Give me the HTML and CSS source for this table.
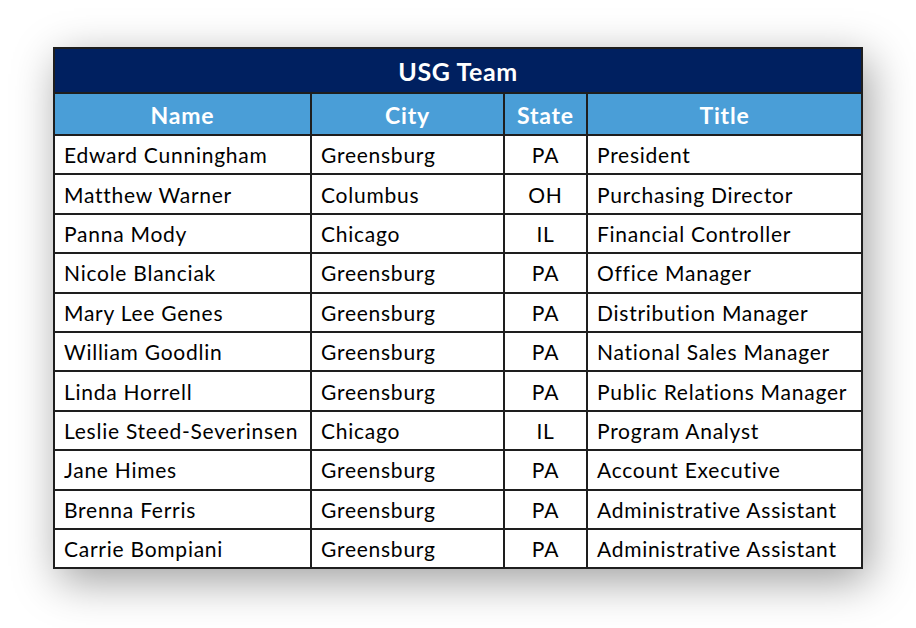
FILE: index.html
```html
<!DOCTYPE html>
<html lang="en">
<head>
<meta charset="utf-8">
<title>USG Team</title>
<link rel="stylesheet" href="styles.css">
</head>
<body>
<main class="page">
  <table class="team">
    <colgroup>
      <col class="c-name">
      <col class="c-city">
      <col class="c-state">
      <col class="c-title">
    </colgroup>
    <thead>
      <tr class="caption-row"><th colspan="4">USG Team</th></tr>
      <tr class="head-row">
        <th>Name</th><th>City</th><th>State</th><th>Title</th>
      </tr>
    </thead>
    <tbody>
      <tr><td>Edward Cunningham</td><td>Greensburg</td><td class="st">PA</td><td>President</td></tr>
      <tr><td>Matthew Warner</td><td>Columbus</td><td class="st">OH</td><td>Purchasing Director</td></tr>
      <tr><td>Panna Mody</td><td>Chicago</td><td class="st">IL</td><td>Financial Controller</td></tr>
      <tr><td>Nicole Blanciak</td><td>Greensburg</td><td class="st">PA</td><td>Office Manager</td></tr>
      <tr><td>Mary Lee Genes</td><td>Greensburg</td><td class="st">PA</td><td>Distribution Manager</td></tr>
      <tr><td>William Goodlin</td><td>Greensburg</td><td class="st">PA</td><td>National Sales Manager</td></tr>
      <tr><td>Linda Horrell</td><td>Greensburg</td><td class="st">PA</td><td>Public Relations Manager</td></tr>
      <tr><td>Leslie Steed-Severinsen</td><td>Chicago</td><td class="st">IL</td><td>Program Analyst</td></tr>
      <tr><td>Jane Himes</td><td>Greensburg</td><td class="st">PA</td><td>Account Executive</td></tr>
      <tr><td>Brenna Ferris</td><td>Greensburg</td><td class="st">PA</td><td>Administrative Assistant</td></tr>
      <tr><td>Carrie Bompiani</td><td>Greensburg</td><td class="st">PA</td><td>Administrative Assistant</td></tr>
    </tbody>
  </table>
</main>
</body>
</html>
```

FILE: styles.css
```css
html, body {
  margin: 0;
  padding: 0;
  background: #ffffff;
}
.page {
  width: 916px;
  height: 628px;
  padding: 47px 0 0 53px;
  box-sizing: border-box;
}
.team {
  border-collapse: collapse;
  table-layout: fixed;
  width: 808px;
  font-family: Lato, "Open Sans", sans-serif;
  color: #000;
  box-shadow: 6px 12px 42px rgba(0, 0, 0, 0.38);
  background: #fff;
}
.c-name { width: 257px; }
.c-city { width: 193px; }
.c-state { width: 83px; }
.c-title { width: 275px; }
.team th, .team td {
  border: 2px solid #1e1e1e;
  padding: 0;
}
.caption-row th {
  background: #002060;
  color: #ffffff;
  font-size: 25px;
  font-weight: 700;
  letter-spacing: 0.6px;
  height: 43px;
  text-align: center;
}
.head-row th {
  background: #4a9ed7;
  color: #ffffff;
  font-size: 23px;
  font-weight: 700;
  letter-spacing: 0.8px;
  height: 38px;
  padding-top: 2px;
  text-align: center;
}
.team td {
  font-size: 21px;
  letter-spacing: 0.75px;
  height: 37.4px;
  padding-left: 9px;
  white-space: nowrap;
}
.team td.st {
  text-align: center;
  padding-left: 0;
}
```
